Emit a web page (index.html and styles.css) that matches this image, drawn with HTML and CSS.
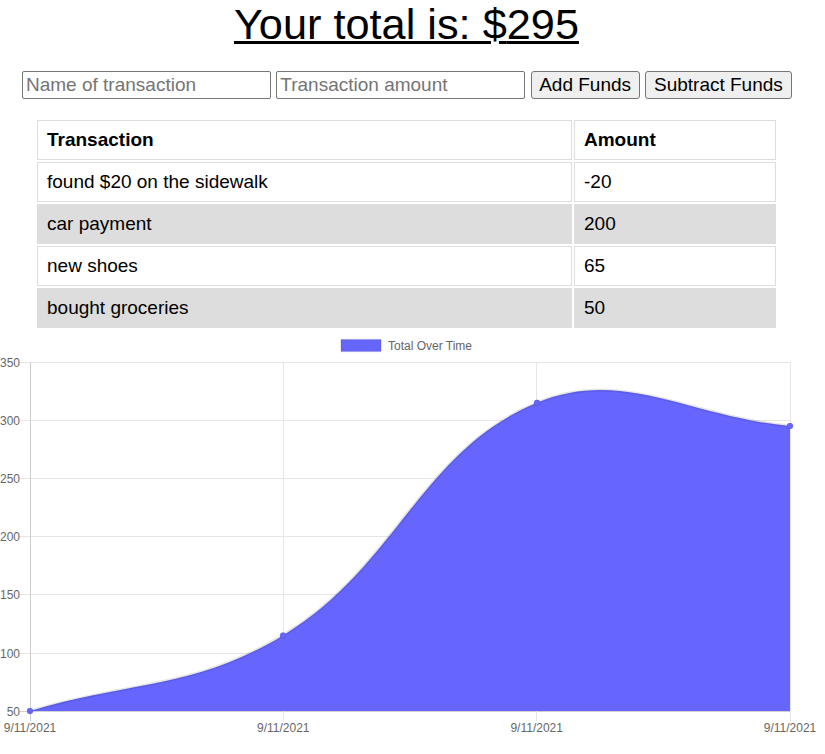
FILE: index.html
```html
<!DOCTYPE html>
<html lang="en">
<head>
<meta charset="utf-8">
<title>Budget Tracker</title>
<link rel="stylesheet" href="styles.css">
</head>
<body>
<div class="page">
  <h1 class="total">Your total is: $<span>295</span></h1>
  <form class="entry">
    <input class="field" type="text" placeholder="Name of transaction">
    <input class="field" type="number" placeholder="Transaction amount">
    <button class="btn btn-add" type="button">Add Funds</button>
    <button class="btn btn-sub" type="button">Subtract Funds</button>
  </form>
  <table class="ledger">
    <thead>
      <tr><th>Transaction</th><th class="amt">Amount</th></tr>
    </thead>
    <tbody>
      <tr><td>found $20 on the sidewalk</td><td>-20</td></tr>
      <tr><td>car payment</td><td>200</td></tr>
      <tr><td>new shoes</td><td>65</td></tr>
      <tr><td>bought groceries</td><td>50</td></tr>
    </tbody>
  </table>
  <div class="chart">
    <svg class="chart-svg" width="825" height="424" viewBox="0 330 825 424" xmlns="http://www.w3.org/2000/svg">
      <g class="legend">
        <rect x="341" y="339.5" width="40" height="12" fill="#6666ff" stroke="rgba(0,0,0,0.1)" stroke-width="1.5"/>
        <text x="388" y="349.5">Total Over Time</text>
      </g>
      <g class="grid" stroke="#e6e6e6" stroke-width="1">
        <line x1="20" y1="362.5" x2="790" y2="362.5"/>
        <line x1="20" y1="420.5" x2="790" y2="420.5"/>
        <line x1="20" y1="478.5" x2="790" y2="478.5"/>
        <line x1="20" y1="536.5" x2="790" y2="536.5"/>
        <line x1="20" y1="594.5" x2="790" y2="594.5"/>
        <line x1="20" y1="653.5" x2="790" y2="653.5"/>
        <line x1="20" y1="711.5" x2="790" y2="711.5" stroke="#d0d0d0"/>
        <line x1="283.5" y1="362" x2="283.5" y2="721"/>
        <line x1="536.5" y1="362" x2="536.5" y2="721"/>
        <line x1="790.5" y1="362" x2="790.5" y2="721"/>
        <line x1="30.5" y1="362" x2="30.5" y2="721" stroke="#cccccc"/>
      </g>
      <g class="ylabels">
        <text x="20" y="366.5">350</text>
        <text x="20" y="424.5">300</text>
        <text x="20" y="482.5">250</text>
        <text x="20" y="540.5">200</text>
        <text x="20" y="598.5">150</text>
        <text x="20" y="657.5">100</text>
        <text x="20" y="715.5">50</text>
      </g>
      <g class="xlabels">
        <text x="30" y="731.5">9/11/2021</text>
        <text x="283.3" y="731.5">9/11/2021</text>
        <text x="536.7" y="731.5">9/11/2021</text>
        <text x="790" y="731.5">9/11/2021</text>
      </g>
      <path d="M30,711 C131.2,680.8 195.0,688.9 283,635.4 C397.8,565.6 420.3,450.9 537,402.7 C623.1,367.1 688.8,416.7 790,426 L790,711 Z" fill="#6666ff"/>
      <path d="M30,711 C131.2,680.8 195.0,688.9 283,635.4 C397.8,565.6 420.3,450.9 537,402.7 C623.1,367.1 688.8,416.7 790,426" fill="none" stroke="rgba(0,0,0,0.1)" stroke-width="3"/>
      <g class="points" fill="#6666ff" stroke="rgba(0,0,0,0.1)" stroke-width="1">
        <circle cx="30" cy="711" r="3"/>
        <circle cx="283" cy="635.4" r="3"/>
        <circle cx="537" cy="402.7" r="3"/>
        <circle cx="790" cy="426" r="3"/>
      </g>
    </svg>
  </div>
</div>
</body>
</html>
```

FILE: styles.css
```css
html, body {
  margin: 0;
  padding: 0;
  background: #ffffff;
}

body {
  font-family: "Liberation Sans", Arial, sans-serif;
  color: #000000;
}

.page {
  width: 825px;
}

.total {
  width: 813px;
  margin: 0;
  font-size: 43.3px;
  font-weight: normal;
  line-height: normal;
  text-align: center;
  text-decoration: underline;
  text-decoration-thickness: 3px;
}

.entry {
  display: flex;
  gap: 5.3px;
  margin: 22px 0 0 22px;
  height: 28px;
}

.field {
  box-sizing: border-box;
  width: 249px;
  height: 28px;
  margin: 0;
  padding: 1px 3px;
  border: 1px solid #767676;
  border-radius: 2px;
  font-family: "Liberation Sans", Arial, sans-serif;
  font-size: 19px;
  color: #000000;
  background: #ffffff;
  -moz-appearance: textfield;
}

.field::-webkit-outer-spin-button,
.field::-webkit-inner-spin-button {
  -webkit-appearance: none;
  margin: 0;
}

.field::placeholder {
  color: #757575;
}

.btn {
  box-sizing: border-box;
  height: 28px;
  margin: 0;
  padding: 1px 6px;
  border: 1px solid #767676;
  border-radius: 3px;
  background: #efefef;
  font-family: "Liberation Sans", Arial, sans-serif;
  font-size: 19px;
  color: #000000;
}

.btn-add {
  width: 109px;
}

.btn-sub {
  width: 147px;
}

.ledger {
  margin: 19px 0 0 35px;
  width: 743px;
  table-layout: fixed;
  border-collapse: separate;
  border-spacing: 2px;
  font-size: 19px;
}

.ledger th,
.ledger td {
  box-sizing: border-box;
  border: 1px solid #dddddd;
  padding: 8px 9px;
  line-height: 22px;
  text-align: left;
}

.ledger th {
  font-weight: bold;
}

.ledger .amt {
  width: 202px;
}

.ledger tbody tr:nth-child(even) td {
  background: #dddddd;
}

.chart {
  margin-top: 0;
  height: 424px;
}

.chart-svg {
  display: block;
}

.chart-svg text {
  font-family: "Liberation Sans", Arial, sans-serif;
  font-size: 12px;
  fill: #666666;
}

.ylabels text {
  text-anchor: end;
}

.xlabels text {
  text-anchor: middle;
}
```
